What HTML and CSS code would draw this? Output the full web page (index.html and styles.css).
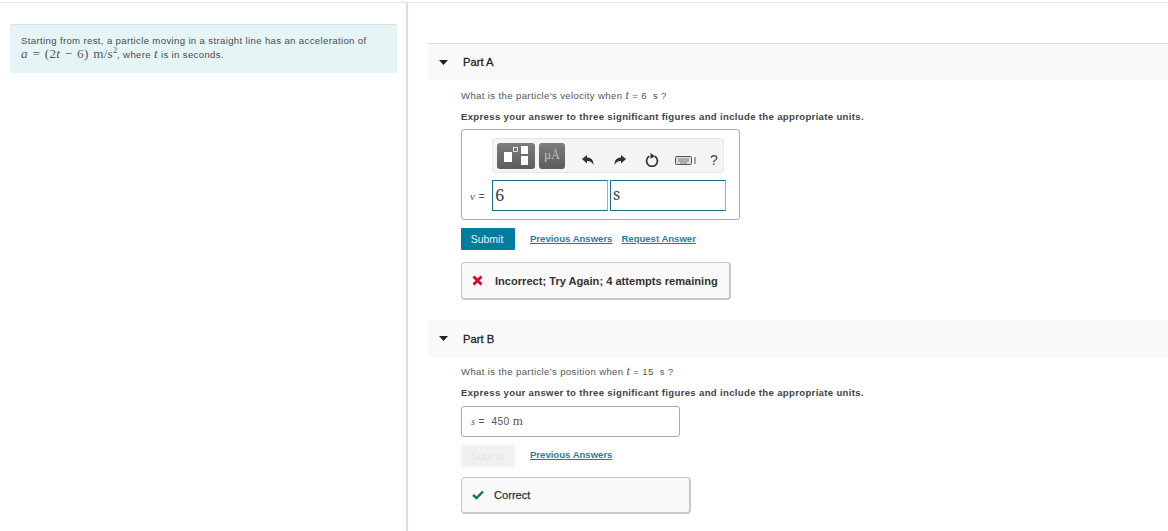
FILE: index.html
```html
<!DOCTYPE html>
<html lang="en">
<head>
<meta charset="utf-8">
<title>Particle problem</title>
<link rel="stylesheet" href="styles.css">
</head>
<body>
<div class="page">
  <aside class="left">
    <div class="intro">
      <p>Starting from rest, a particle moving in a straight line has an acceleration of</p>
      <p class="intro-line"><span class="math big"><i>a</i> = (2<i>t</i> − 6) m/s<sup>2</sup></span>, where <span class="math big"><i>t</i></span> is in seconds.</p>
    </div>
  </aside>
  <main class="right">
    <section class="part part-a">
      <header class="part-head">
        <svg class="caret" width="9" height="5" viewBox="0 0 9 5"><path d="M0 0H9L4.500 5Z" fill="#222"/></svg>
        <span>Part A</span>
      </header>
      <div class="part-body">
        <p class="q">What is the particle's velocity when <span class="math var"><i>t</i></span> = 6 &nbsp;s ?</p>
        <p class="instr">Express your answer to three significant figures and include the appropriate units.</p>
        <div class="answer-box">
          <div class="toolbar">
            <span class="tool tool-tpl">
              <svg width="24" height="19" viewBox="0 0 24 19"><rect x="0" y="6" width="8" height="10" fill="#fff"/><rect x="9.400" y="1.400" width="4" height="4" fill="none" stroke="#fff" stroke-width=".8"/><rect x="17" y="0" width="7" height="8" fill="#fff"/><rect x="17" y="10" width="7" height="9" fill="#fff"/></svg>
            </span>
            <span class="tool tool-mu">µÅ</span>
            <span class="tool-icons">
              <svg width="14" height="14" viewBox="0 0 14 14"><path d="M1 6 6 2V4.600C10 4.600 12.500 7 12.500 12 11 9.300 9.500 8 6 8V10.500Z" fill="#333"/></svg>
              <svg width="14" height="14" viewBox="0 0 14 14"><path d="M13 6 8 2V4.600C4 4.600 1.500 7 1.500 12 3 9.300 4.500 8 8 8V10.500Z" fill="#333"/></svg>
              <svg width="14" height="14" viewBox="0 0 14 14"><path d="M4.300 3.300A5.400 5.400 0 1 0 9.700 3.300" fill="none" stroke="#333" stroke-width="1.700"/><path d="M5.500 0 10 3.200 5.500 5.800Z" fill="#333"/></svg>
              <svg class="kbd" width="22" height="9" viewBox="0 0 22 9"><rect x=".5" y=".5" width="16" height="8" rx="1" fill="#ddd" stroke="#555"/><path d="M3 3H14M3 5H14M5 7H12" stroke="#666" stroke-width=".8"/><path d="M20 1V8" stroke="#555"/></svg>
              <span class="help">?</span>
            </span>
          </div>
          <div class="inputs">
            <span class="label"><span class="math"><i>v</i></span> =</span>
            <span class="field val">6</span>
            <span class="field unit">s</span>
          </div>
        </div>
        <div class="actions">
          <button class="btn">Submit</button>
          <a class="link">Previous Answers</a>
          <a class="link">Request Answer</a>
        </div>
        <div class="feedback wrong">
          <svg width="11" height="11" viewBox="0 0 11 11"><path d="M1.500 1.500 9.500 9.500M9.500 1.500 1.500 9.500" stroke="#e0002a" stroke-width="2.800"/></svg>
          <span>Incorrect; Try Again; 4 attempts remaining</span>
        </div>
      </div>
    </section>
    <section class="part part-b">
      <header class="part-head">
        <svg class="caret" width="9" height="5" viewBox="0 0 9 5"><path d="M0 0H9L4.500 5Z" fill="#222"/></svg>
        <span>Part B</span>
      </header>
      <div class="part-body">
        <p class="q">What is the particle's position when <span class="math var"><i>t</i></span> = 15 &nbsp;s ?</p>
        <p class="instr">Express your answer to three significant figures and include the appropriate units.</p>
        <div class="result"><span class="math"><i>s</i></span> =&nbsp; 450 <span class="math unit-m">m</span></div>
        <div class="actions second">
          <button class="btn off" disabled>Submit</button>
          <a class="link">Previous Answers</a>
        </div>
        <div class="feedback right-answer">
          <svg width="12" height="10" viewBox="0 0 12 10"><path d="M1 5 4.500 8 11 1.500" fill="none" stroke="#0a8040" stroke-width="2.400"/></svg>
          <span>Correct</span>
        </div>
      </div>
    </section>
  </main>
</div>
</body>
</html>
```

FILE: styles.css
```css
* { box-sizing: border-box; }
html, body { margin: 0; padding: 0; background: #fff; }
body { width: 1168px; height: 531px; overflow: hidden; font-family: "Liberation Sans", Arial, sans-serif; color: #444; }
p { margin: 0; }
.page { display: flex; height: 529px; margin-top: 2px; border-top: 1px solid #e2e4e8; }
.left { width: 408px; flex: none; padding: 21px 10px 0; border-right: 2px solid #d9dde6; }
.intro { width: 387px; height: 49px; padding: 9px 11px 0; background: #e5f5f6; border-top: 1px solid #d5e5e6; font-size: 9.600px; letter-spacing: .35px; line-height: 14px; color: #4a4a4a; }
.intro-line { margin-top: -1px; line-height: 13px; white-space: nowrap; }
.math { font-family: "Liberation Serif", "DejaVu Serif", serif; }
.math.big { font-size: 13.200px; line-height: 1; letter-spacing: .2px; word-spacing: 1.200px; color: #555; }
.math sup { font-size: 8px; line-height: 0; }
.right { flex: 1; padding: 40px 0 0 20px; }
.part-head { display: flex; align-items: center; height: 37px; padding-left: 11px; gap: 15px; background: #f9f9f9; font-size: 11.200px; font-weight: 400; color: #222; -webkit-text-stroke: .3px #222; }
.part-a .part-head { border-top: 1px solid #ddd; }
.part-b { margin-top: 20px; }
.part-body { padding-left: 33px; }
.q { padding-top: 8px; height: 27px; font-size: 9.600px; letter-spacing: .36px; line-height: 12px; color: #555; }
.part-a .q { padding-top: 9px; }
.var { font-size: 12px; }
.instr { margin-top: 3px; font-size: 9.600px; letter-spacing: .32px; line-height: 12px; font-weight: 700; color: #444; }
.part-a .instr { margin-top: 4px; }
.answer-box { width: 279px; height: 91px; margin-top: 6px; padding: 8px 0 0 30px; border: 1px solid #aaa; border-radius: 3px; }
.toolbar { display: flex; align-items: center; width: 232px; height: 35px; padding-left: 4px; gap: 4px; background: #f4f4f4; border: 1px solid #e6e6e6; border-radius: 4px; }
.tool { display: flex; align-items: center; justify-content: center; height: 26px; border-radius: 3px; background: linear-gradient(#7c7c7c, #5c5c5c); color: #c4c4c4; }
.tool-tpl { width: 38px; }
.tool-mu { width: 26px; font-family: "Liberation Serif", serif; font-size: 12.500px; }
.tool-icons { display: flex; align-items: center; margin: 9px 0 0 12px; gap: 18px; }
.kbd { margin-left: -2px; margin-right: -10px; }
.help { margin-left: 5px; font-size: 14px; color: #444; }
.inputs { display: flex; align-items: center; margin: 7px 0 0 -22px; }
.label { width: 22px; font-size: 10px; letter-spacing: .5px; color: #555; }
.label .math { font-size: 11px; }
.field { display: flex; align-items: center; width: 116px; height: 31px; margin-right: 2px; padding: 0 0 3px 2px; border: 1px solid #17708f; border-right-color: #7dbcd0; font-family: "Noto Serif", "DejaVu Serif", serif; font-size: 17px; color: #444; }
.field.unit { font-size: 16px; }
.actions { display: flex; align-items: center; gap: 9px; margin-top: 8px; }
.btn { width: 54px; height: 22px; margin-right: 6px; padding: 0 2px 0 0; border: 0; border-radius: 1px; background: #007c9f; color: #e8f3f6; font: 10.500px "Liberation Sans", Arial, sans-serif; }
.btn.off { background: #f1f1f1; color: #e4e4e4; }
.link { padding-bottom: 2px; font-size: 9.550px; font-weight: 700; color: #1f7f9f; text-decoration: underline; }
.second .link { padding-bottom: 4px; }
.feedback { display: flex; align-items: center; background: #f9f9f9; border: 1px solid #c8c8c8; border-right-width: 2px; border-bottom-width: 2px; border-radius: 4px; font-size: 11.100px; color: #333; }
.wrong { width: 270px; height: 38px; margin-top: 12px; padding-left: 10px; gap: 12px; font-weight: 700; }
.right-answer { width: 230px; height: 37px; margin-top: 10px; padding-left: 10px; gap: 10px; -webkit-text-stroke: .25px #333; }
.result { display: flex; align-items: center; white-space: pre; width: 219px; height: 31px; margin-top: 7px; padding: 0 0 1px 9px; border: 1px solid #aaa; border-radius: 3px; font-size: 10.200px; letter-spacing: .4px; color: #555; }
.unit-m { font-size: 13px; }
.second { margin-top: 8px; }
```
